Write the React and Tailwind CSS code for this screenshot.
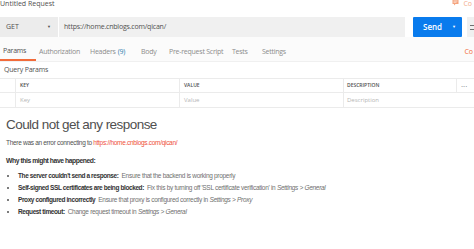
export default function App() {
    const tabs = [
        { label: "Params", w: "w-[36px]", active: true },
        { label: "Authorization", w: "w-[51px]" },
        { label: "Headers", count: "(9)", w: "w-[51px]" },
        { label: "Body", w: "w-[28px]" },
        { label: "Pre-request Script", w: "w-[63px]" },
        { label: "Tests", w: "w-[30px]" },
        { label: "Settings", w: "w-[31px]" },
    ];

    const reasons = [
        {
            bold: "The server couldn't send a response:",
            text: <>Ensure that the backend is working properly</>,
        },
        {
            bold: "Self-signed SSL certificates are being blocked:",
            text: <>Fix this by turning off 'SSL certificate verification' in <i>Settings &gt; General</i></>,
        },
        {
            bold: "Proxy configured incorrectly",
            text: <>Ensure that proxy is configured correctly in <i>Settings &gt; Proxy</i></>,
        },
        {
            bold: "Request timeout:",
            text: <>Change request timeout in <i>Settings &gt; General</i></>,
        },
    ];

    return (
        <div className="w-[474px] h-[249px] overflow-hidden bg-white font-['Open_Sans',sans-serif]">
            {/* Title */}
            <div className="flex justify-between h-[17px]">
                <span className="text-[7px] leading-[8px] text-[#505050]">Untitled Request</span>
                <div className="flex items-start gap-[4px] mr-[2px]">
                    <svg width="7" height="7" viewBox="0 0 7 7" className="mt-[-1px]">
                        <path d="M0.5 0.5h6v4.5h-3l-1.5 1.5v-1.5h-1.5z" fill="#f5a47e" />
                        <path d="M1.5 2h4M1.5 3.3h3" stroke="#fff" strokeWidth="0.6" />
                    </svg>
                    <span className="text-[7px] leading-[8px] text-[#f3ad8c]">Co</span>
                </div>
            </div>

            {/* URL bar */}
            <div className="flex h-[20px]">
                <div className="w-[58px] shrink-0 bg-[#ececec] flex items-center justify-between pl-[6px] pr-[7px] text-[7px] text-[#505050]">
                    <span>GET</span>
                    <span className="text-[4px]">▼</span>
                </div>
                <div className="w-[346px] shrink-0 ml-[1px] bg-[#f0f0f0] flex items-center pl-[5px] text-[7px] tracking-[-0.2px] text-[#505050]">
                    https://home.cnblogs.com/qican/
                </div>
                <div className="w-[49px] shrink-0 ml-[8px] bg-[#097bed] rounded-[1px] flex items-center pl-[10px] pr-[6px] justify-between text-white">
                    <span className="text-[8px] font-semibold">Send</span>
                    <span className="text-[4px]">▼</span>
                </div>
                <div className="w-[12px] shrink-0 ml-[5px] bg-[#f0f0f0] flex items-center pl-[3px]">
                    <div className="w-[4px] h-[5px] border-t border-b border-[#707070]" />
                </div>
            </div>

            {/* Tabs */}
            <div className="flex items-end justify-between h-[25px] bg-[#fbfbfb] border-b border-[#f0f0f0]">
                <div className="flex">
                    {tabs.map((t) => (
                        <div
                            key={t.label}
                            className={`${t.w} h-[17px] pl-[3px] flex items-center text-[7px] tracking-[-0.25px] whitespace-nowrap ${t.active ? "text-[#505050] border-b-2 border-[#f26b3a]" : "text-[#8c8c8c]"}`}
                        >
                            {t.label}
                            {t.count && <span className="ml-[2px] text-[#2f7fb0]">{t.count}</span>}
                        </div>
                    ))}
                </div>
                <span className="h-[17px] flex items-center mr-[1px] text-[7px] text-[#f26b3a]">Co</span>
            </div>

            {/* Query params */}
            <div className="h-[16px] flex items-center pl-[4px] text-[7px] tracking-[-0.2px] text-[#505050]">
                Query Params
            </div>
            <div className="grid grid-cols-[15px_164px_164px_113px_18px] border-t border-b border-[#ebebeb] text-[5px]">
                <div className="h-[14px] border-b border-[#ebebeb]" />
                <div className="h-[14px] border-b border-l border-[#ebebeb] flex items-center pl-[4px] font-semibold text-[#505050]">KEY</div>
                <div className="h-[14px] border-b border-l border-[#ebebeb] flex items-center pl-[4px] font-semibold text-[#505050]">VALUE</div>
                <div className="h-[14px] border-b border-l border-[#ebebeb] flex items-center pl-[3px] font-semibold text-[#505050]">DESCRIPTION</div>
                <div className="h-[14px] border-b border-l border-[#ebebeb] flex items-center pl-[4px] text-[8px] text-[#707070]">···</div>
                <div className="h-[14px]" />
                <div className="h-[14px] border-l border-[#ebebeb] flex items-center pl-[4px] text-[6px] text-[#b5b5b5]">Key</div>
                <div className="h-[14px] border-l border-[#ebebeb] flex items-center pl-[4px] text-[6px] text-[#b5b5b5]">Value</div>
                <div className="h-[14px] border-l border-[#ebebeb] flex items-center pl-[3px] text-[6px] text-[#b5b5b5]">Description</div>
                <div className="h-[14px]" />
            </div>

            {/* Error */}
            <div className="pl-[6px] font-['Liberation_Sans',Arial,sans-serif]">
                <h1 className="mt-[8px] text-[13.5px] leading-[18px] tracking-[-0.55px] text-[#505050]">
                    Could not get any response
                </h1>
                <p className="mt-[4px] text-[6.5px] leading-[10px] tracking-[-0.3px] text-[#505050]">
                    There was an error connecting to <a href="#" className="text-[#ef4f3c]">https://home.cnblogs.com/qican/</a>
                </p>
                <h2 className="mt-[7px] text-[6.8px] leading-[12px] font-bold tracking-[-0.45px] text-[#333]">
                    Why this might have happened:
                </h2>
                <ul className="mt-[3px]">
                    {reasons.map((r) => (
                        <li key={r.bold} className="flex items-center h-[12px] text-[6.5px] tracking-[-0.3px] whitespace-nowrap">
                            <span className="w-[2px] h-[2px] ml-[1px] mr-[9px] rounded-full bg-[#505050]" />
                            <b className="text-[#333] tracking-[-0.4px]">{r.bold}</b>
                            <span className="ml-[3px] text-[#707070]">{r.text}</span>
                        </li>
                    ))}
                </ul>
            </div>
        </div>
    );
}
